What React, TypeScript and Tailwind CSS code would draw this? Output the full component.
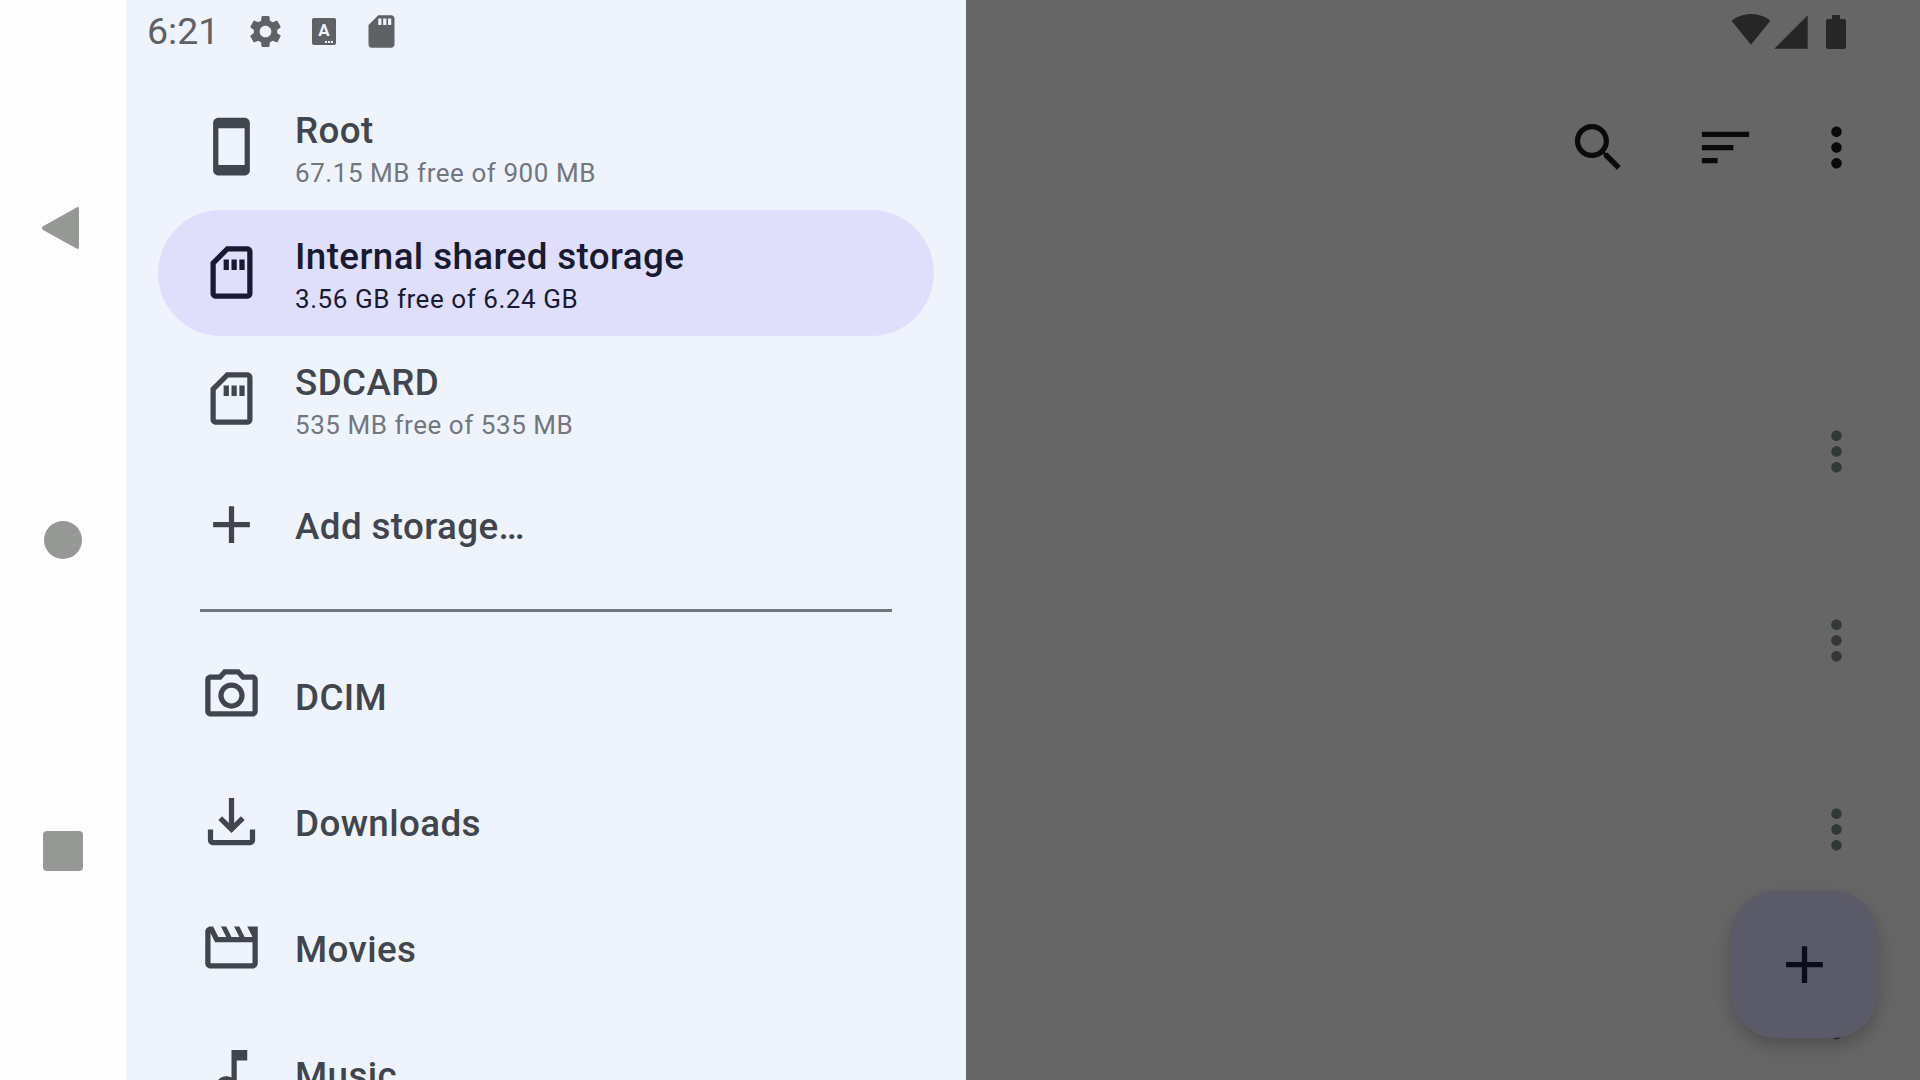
const paths = {
  phone: "M17 1.01 7 1c-1.1 0-2 .9-2 2v18c0 1.1.9 2 2 2h10c1.1 0 2-.9 2-2V3c0-1.1-.9-1.99-2-1.99zM17 19H7V5h10v14z",
  sd: "M18 4v16H6V8.83L10.83 4H18m0-2h-8L4 8v12c0 1.1.9 2 2 2h12c1.1 0 2-.9 2-2V4c0-1.1-.9-2-2-2zM9 7h2v4H9zm3 0h2v4h-2zm3 0h2v4h-2z",
  sdFilled: "M18 2h-8L4 8v12c0 1.1.9 2 2 2h12c1.1 0 2-.9 2-2V4c0-1.1-.9-2-2-2zm-6 6h-2V4h2v4zm3 0h-2V4h2v4zm3 0h-2V4h2v4z",
  plus: "M19 13h-6v6h-2v-6H5v-2h6V5h2v6h6v2z",
  camera: "M14.12 4l1.83 2H20v12H4V6h4.05l1.83-2h4.24M15 2H9L7.17 4H4c-1.1 0-2 .9-2 2v12c0 1.1.9 2 2 2h16c1.1 0 2-.9 2-2V6c0-1.1-.9-2-2-2h-3.17L15 2zm-3 7c1.65 0 3 1.35 3 3s-1.35 3-3 3-3-1.35-3-3 1.35-3 3-3m0-2c-2.76 0-5 2.24-5 5s2.24 5 5 5 5-2.24 5-5-2.24-5-5-5z",
  download: "M19 15v4H5v-4H3v4c0 1.1.9 2 2 2h14c1.1 0 2-.9 2-2v-4h-2zm-2-3.6-1.4-1.4-2.6 2.6V3h-2v9.6L8.4 10 7 11.4l5 5 5-5z",
  movie: "M4 6.47 5.76 10H20v8H4V6.47M22 4h-4l2 4h-3l-2-4h-2l2 4h-3l-2-4H8l2 4H7L5 4H4c-1.1 0-1.99.9-1.99 2L2 18c0 1.1.9 2 2 2h16c1.1 0 2-.9 2-2V4z",
  music: "M12 3v10.55c-.59-.34-1.27-.55-2-.55-2.21 0-4 1.79-4 4s1.79 4 4 4 4-1.79 4-4V7h4V3h-6zm-2 16c-1.1 0-2-.9-2-2s.9-2 2-2 2 .9 2 2-.9 2-2 2z",
  gear: "M19.14 12.94c.04-.3.06-.61.06-.94 0-.32-.02-.64-.07-.94l2.03-1.58c.18-.14.23-.41.12-.61l-1.92-3.32c-.12-.22-.37-.29-.59-.22l-2.39.96c-.5-.38-1.03-.7-1.62-.94l-.36-2.54c-.04-.24-.24-.41-.48-.41h-3.84c-.24 0-.43.17-.47.41l-.36 2.54c-.59.24-1.13.57-1.62.94l-2.39-.96c-.22-.08-.47 0-.59.22L2.74 8.87c-.12.21-.08.47.12.61l2.03 1.58c-.05.3-.09.63-.09.94s.02.64.07.94l-2.03 1.58c-.18.14-.23.41-.12.61l1.92 3.32c.12.22.37.29.59.22l2.39-.96c.5.38 1.03.7 1.62.94l.36 2.54c.05.24.24.41.48.41h3.84c.24 0 .44-.17.47-.41l.36-2.54c.59-.24 1.13-.56 1.62-.94l2.39.96c.22.08.47 0 .59-.22l1.92-3.32c.12-.22.07-.47-.12-.61l-2.01-1.58zM12 15.6c-1.98 0-3.6-1.62-3.6-3.6s1.62-3.6 3.6-3.6 3.6 1.62 3.6 3.6-1.62 3.6-3.6 3.6z",
  search: "M15.5 14h-.79l-.28-.27C15.41 12.59 16 11.11 16 9.5 16 5.91 13.09 3 9.5 3S3 5.91 3 9.5 5.91 16 9.5 16c1.61 0 3.09-.59 4.23-1.57l.27.28v.79l5 4.99L20.49 19l-4.99-5zm-6 0C7.01 14 5 11.99 5 9.5S7.01 5 9.5 5 14 7.01 14 9.5 11.99 14 9.5 14z",
  sort: "M3 18h6v-2H3v2zM3 6v2h18V6H3zm0 7h12v-2H3v2z",
  more: "M12 8c1.1 0 2-.9 2-2s-.9-2-2-2-2 .9-2 2 .9 2 2 2zm0 2c-1.1 0-2 .9-2 2s.9 2 2 2 2-.9 2-2-.9-2-2-2zm0 6c-1.1 0-2 .9-2 2s.9 2 2 2 2-.9 2-2-.9-2-2-2z",
  wifi: "M12 21.5 23.64 7C23.19 6.66 18.71 3 12 3 5.28 3 .81 6.66.36 7z",
  signal: "M2 22h20V2z",
};

function Icon({ d, className }: { d: string; className: string }) {
  return (
    <svg viewBox="0 0 24 24" fill="currentColor" className={`shrink-0 ${className}`}>
      <path d={d} />
    </svg>
  );
}

function NavRail() {
  return (
    <div className="flex flex-col w-[126px] shrink-0 justify-center bg-[#fefefe]">
      <div className="flex h-[312px] items-center justify-center pr-[6px]">
        <svg viewBox="0 0 37 42" className="w-[37px] h-[42px]" fill="#969896">
          <path d="M35 0.3c1.2-.7 2 .2 2 1.4v38.6c0 1.2-.9 2-2 1.4L1 23c-1.3-.8-1.3-3 0-3.8z" />
        </svg>
      </div>
      <div className="flex h-[312px] items-center justify-center">
        <div className="w-[38px] h-[38px] rounded-full bg-[#969896]" />
      </div>
      <div className="flex h-[312px] items-center justify-center pb-[2px]">
        <div className="w-[40px] h-[40px] rounded-[4px] bg-[#969896]" />
      </div>
    </div>
  );
}

function StorageRow({
  icon,
  title,
  subtitle,
  selected,
}: {
  icon: string;
  title: string;
  subtitle?: string;
  selected?: boolean;
}) {
  return (
    <div
      className={`flex items-center shrink-0 h-[126px] mx-[32px] pl-[42px] gap-[32px] rounded-full ${
        selected ? "bg-[#dfdffc] text-[#171a30]" : "text-[#41454d]"
      }`}
    >
      <Icon d={icon} className="w-[63px] h-[63px] mb-[2px]" />
      <div className="flex flex-col pt-[4px]">
        <div className="text-[36.75px] leading-[48px] font-medium tracking-[0.4px]">{title}</div>
        {subtitle && (
          <div
            className={`text-[26px] leading-[36px] tracking-[0.55px] ${
              selected ? "text-[#171a30]" : "text-[#72767e]"
            }`}
          >
            {subtitle}
          </div>
        )}
      </div>
    </div>
  );
}

function Drawer() {
  return (
    <div className="flex flex-col w-[840px] shrink-0 bg-[#eff3fc] overflow-hidden">
      <div className="flex items-center shrink-0 h-[63px] pl-[21px] text-[#5f6165]">
        <span className="text-[37.5px] leading-[63px] w-[100px]">6:21</span>
        <Icon d={paths.gear} className="w-[39px] h-[39px] ml-[-1px]" />
        <div className="relative flex justify-center ml-[27px] w-[24px] h-[27px] rounded-[2px] bg-[#5f6165]">
          <span className="text-[17px] leading-[24px] font-bold text-[#eff3fc]">A</span>
          <div className="absolute right-[3px] bottom-[2px] flex gap-[1px]">
            <div className="w-[2px] h-[2px] bg-[#eff3fc]" />
            <div className="w-[2px] h-[2px] bg-[#eff3fc]" />
            <div className="w-[2px] h-[2px] bg-[#eff3fc]" />
          </div>
        </div>
        <Icon d={paths.sdFilled} className="w-[39px] h-[39px] ml-[26px]" />
      </div>
      <div className="h-[21px] shrink-0" />
      <StorageRow icon={paths.phone} title="Root" subtitle="67.15 MB free of 900 MB" />
      <StorageRow icon={paths.sd} title="Internal shared storage" subtitle="3.56 GB free of 6.24 GB" selected />
      <StorageRow icon={paths.sd} title="SDCARD" subtitle="535 MB free of 535 MB" />
      <StorageRow icon={paths.plus} title="Add storage…" />
      <div className="shrink-0 h-[3px] mx-[74px] mt-[21px] mb-[21px] bg-[#72767e]" />
      <StorageRow icon={paths.camera} title="DCIM" />
      <StorageRow icon={paths.download} title="Downloads" />
      <StorageRow icon={paths.movie} title="Movies" />
      <StorageRow icon={paths.music} title="Music" />
    </div>
  );
}

function FileArea() {
  return (
    <div className="relative flex flex-col flex-1 bg-[#666666] overflow-hidden">
      <div className="flex items-center justify-end shrink-0 h-[63px] pr-[74px] text-[#262626]">
        <Icon d={paths.wifi} className="w-[40px] h-[40px] mb-[5px]" />
        <Icon d={paths.signal} className="w-[40px] h-[40px]" />
        <svg viewBox="0 0 20 34" fill="currentColor" className="w-[20px] h-[34px] ml-[15px]">
          <path d="M2 4h4V0h8v4h4c1.1 0 2 .9 2 2v26c0 1.1-.9 2-2 2H2c-1.1 0-2-.9-2-2V6c0-1.1.9-2 2-2z" />
        </svg>
      </div>
      <div className="flex items-center justify-end shrink-0 h-[168px] pr-[52px] text-[#0a0a0a]">
        <Icon d={paths.search} className="w-[63px] h-[63px] mr-[64px]" />
        <Icon d={paths.sort} className="w-[63px] h-[63px] mr-[48px]" />
        <Icon d={paths.more} className="w-[63px] h-[63px]" />
      </div>
      <div className="flex flex-col shrink-0 pt-[126px] pr-[52px] items-end text-[#32373a]">
        {[0, 1, 2, 3].map((i) => (
          <div key={i} className="flex items-center h-[189px]">
            <Icon d={paths.more} className="w-[63px] h-[63px]" />
          </div>
        ))}
      </div>
      <div className="absolute right-[42px] bottom-[42px] flex items-center justify-center w-[147px] h-[147px] rounded-[46px] bg-[#5a5a68] text-[#0b0b1a] shadow-[0_8px_18px_rgba(0,0,0,0.22)]">
        <Icon d={paths.plus} className="w-[63px] h-[63px]" />
      </div>
    </div>
  );
}

export default function App() {
  return (
    <div className="flex w-full h-screen overflow-hidden font-['Roboto',sans-serif]">
      <NavRail />
      <Drawer />
      <FileArea />
    </div>
  );
}
